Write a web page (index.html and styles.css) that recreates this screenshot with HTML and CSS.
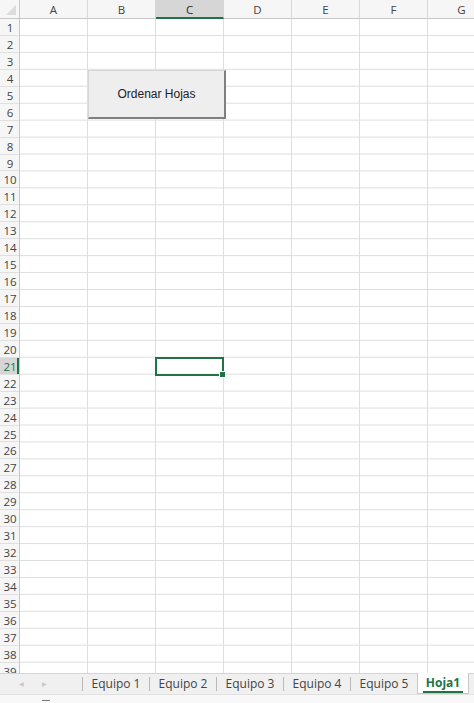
FILE: index.html
```html
<!DOCTYPE html>
<html lang="es">
<head>
  <meta charset="UTF-8">
  <meta name="viewport" content="width=device-width, initial-scale=1.0">
  <title>Libro1 - Excel</title>
  <link rel="stylesheet" href="styles.css">
</head>
<body>
  <div class="sheet">
    <div class="corner"><span class="corner-tri"></span></div>

    <div class="col-heads">
      <div class="col-head">A</div>
      <div class="col-head">B</div>
      <div class="col-head active">C</div>
      <div class="col-head">D</div>
      <div class="col-head">E</div>
      <div class="col-head">F</div>
      <div class="col-head">G</div>
    </div>

    <div class="row-heads">
      <div class="row-head">1</div>
      <div class="row-head">2</div>
      <div class="row-head">3</div>
      <div class="row-head">4</div>
      <div class="row-head">5</div>
      <div class="row-head">6</div>
      <div class="row-head">7</div>
      <div class="row-head">8</div>
      <div class="row-head">9</div>
      <div class="row-head">10</div>
      <div class="row-head">11</div>
      <div class="row-head">12</div>
      <div class="row-head">13</div>
      <div class="row-head">14</div>
      <div class="row-head">15</div>
      <div class="row-head">16</div>
      <div class="row-head">17</div>
      <div class="row-head">18</div>
      <div class="row-head">19</div>
      <div class="row-head">20</div>
      <div class="row-head active">21</div>
      <div class="row-head">22</div>
      <div class="row-head">23</div>
      <div class="row-head">24</div>
      <div class="row-head">25</div>
      <div class="row-head">26</div>
      <div class="row-head">27</div>
      <div class="row-head">28</div>
      <div class="row-head">29</div>
      <div class="row-head">30</div>
      <div class="row-head">31</div>
      <div class="row-head">32</div>
      <div class="row-head">33</div>
      <div class="row-head">34</div>
      <div class="row-head">35</div>
      <div class="row-head">36</div>
      <div class="row-head">37</div>
      <div class="row-head">38</div>
      <div class="row-head">39</div>
    </div>

    <div class="cells">
      <button class="shape-btn">Ordenar Hojas</button>
      <div class="selection"><span class="fill-handle"></span></div>
    </div>
  </div>

  <div class="tabbar">
    <div class="tab-nav">
      <span class="nav-arrow">&#9664;</span>
      <span class="nav-arrow">&#9654;</span>
    </div>
    <div class="tab">Equipo 1</div>
    <div class="tab">Equipo 2</div>
    <div class="tab">Equipo 3</div>
    <div class="tab">Equipo 4</div>
    <div class="tab">Equipo 5</div>
    <div class="tab current"><span>Hoja1</span></div>
  </div>
  <div class="statusbar">
    <span class="status-icon"></span>
  </div>
</body>
</html>
```

FILE: styles.css
```css
body {
  margin: 0;
  width: 474px;
  height: 703px;
  overflow: hidden;
  background: #fff;
  font-family: 'Open Sans', 'Liberation Sans', sans-serif;
  color: #444;
}

.sheet {
  display: grid;
  grid-template-columns: 20px 1fr;
  grid-template-rows: 19px 1fr;
  height: 673px;
  overflow: hidden;
}

.corner {
  position: relative;
  background: #f6f6f6;
  border-right: 1px solid #c8c8c8;
  border-bottom: 1px solid #c8c8c8;
  box-sizing: border-box;
}

.corner-tri {
  position: absolute;
  right: 3px;
  bottom: 3px;
  width: 0;
  height: 0;
  border-left: 10px solid transparent;
  border-bottom: 10px solid #dcdcdc;
}

.col-heads {
  display: flex;
  overflow: hidden;
  background: #f6f6f6;
}

.col-head {
  flex: 0 0 68px;
  height: 19px;
  line-height: 19px;
  text-align: center;
  font-size: 11.5px;
  border-right: 1px solid #d8d8d8;
  border-bottom: 1px solid #c8c8c8;
  box-sizing: border-box;
}

.col-head.active {
  background: #d6d6d6;
  border-bottom: 2px solid #217346;
  color: #2b2b2b;
}

.row-heads {
  background: #f6f6f6;
  border-right: 1px solid #c8c8c8;
}

.row-head {
  height: 16.95px;
  line-height: 18px;
  font-size: 11.5px;
  text-align: center;
  padding-left: 1px;
  border-bottom: 1px solid #e0e0e0;
  box-sizing: border-box;
  overflow: hidden;
}

.row-head.active {
  background: #d6d6d6;
  color: #217346;
  box-shadow: inset -2px 0 0 #217346;
}

.cells {
  position: relative;
  background-image:
    linear-gradient(to bottom, transparent 15.95px, #dedede 15.95px),
    linear-gradient(to right, transparent 67px, #dedede 67px);
  background-size: 100% 16.95px, 68px 100%;
}

.shape-btn {
  position: absolute;
  left: 68px;
  top: 51px;
  width: 138px;
  height: 49px;
  padding: 0;
  background: #eeeeee;
  border: 1px solid #d6d6d6;
  border-right: 2px solid #808080;
  border-bottom: 2px solid #808080;
  font-family: 'Liberation Sans', 'Open Sans', sans-serif;
  font-size: 12px;
  color: #222;
  box-sizing: border-box;
}

.selection {
  position: absolute;
  left: 135px;
  top: 338px;
  width: 69px;
  height: 19px;
  border: 2px solid #217346;
  box-sizing: border-box;
}

.fill-handle {
  position: absolute;
  right: -4px;
  bottom: -4px;
  width: 5px;
  height: 5px;
  background: #217346;
  border: 1px solid #fff;
}

/* sheet tabs */
.tabbar {
  display: flex;
  height: 20px;
  background: #f0f0f0;
  border-top: 1px solid #d4d4d4;
  border-bottom: 1px solid #e2e2e2;
  font-size: 12px;
  color: #444;
}

.tab-nav {
  flex: 0 0 83px;
  display: flex;
  gap: 18px;
  padding-left: 19px;
  align-items: center;
  border-right: 1px solid #b8b8b8;
  margin: 3px 0;
  box-sizing: border-box;
}

.nav-arrow {
  font-size: 6px;
  color: #c8c8c8;
}

.tab {
  flex: 0 0 66px;
  text-align: center;
  border-right: 1px solid #b8b8b8;
  margin: 3px 0;
  line-height: 13px;
}

.tab.current {
  flex: 0 0 50px;
  margin: -1px 0 0 -1px;
  background: #fff;
  border: 1px solid #c8c8c8;
  border-top: none;
  color: #217346;
  font-weight: bold;
  line-height: 19px;
}

.tab.current span {
  display: inline-block;
  line-height: 16px;
  border-bottom: 2px solid #217346;
  padding: 0 3px;
}

.statusbar {
  height: 9px;
  background: #f8f8f8;
  position: relative;
}

.status-icon {
  position: absolute;
  left: 42px;
  top: 5px;
  width: 8px;
  height: 2px;
  border-top: 1px solid #777;
  border-bottom: 1px solid #777;
}
```
